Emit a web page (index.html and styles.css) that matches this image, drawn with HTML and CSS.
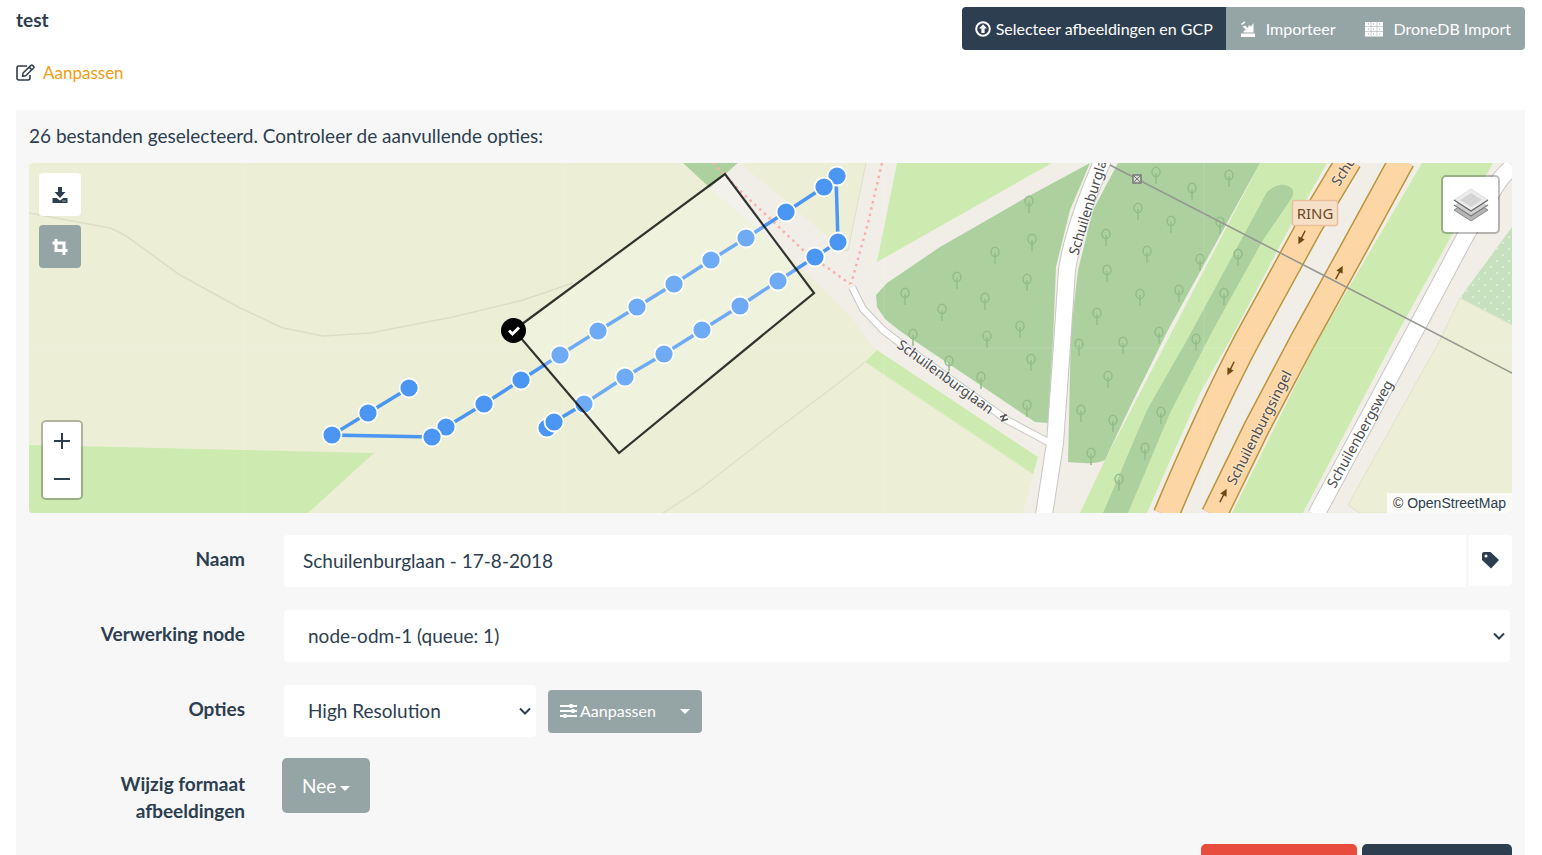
FILE: index.html
```html
<!DOCTYPE html>
<html lang="nl">
<head>
    <meta charset="UTF-8">
    <meta name="viewport" content="width=device-width, initial-scale=1.0">
    <title>test</title>
    <link rel="stylesheet" href="styles.css">
</head>
<body>
<main class="page">
    <header class="project-header">
        <div class="project-info">
            <h1 class="project-name">test</h1>
            <a class="edit-link" href="#">
                <svg class="icon-edit" viewBox="0 0 19 17" width="19" height="17" aria-hidden="true">
                    <path d="M11 2H3Q1 2 1 4v10q0 2 2 2h9q2 0 2-2v-3" fill="none" stroke="currentColor" stroke-width="1.6"/>
                    <path d="M6.5 12.3 7 9l8-7.600q.8-.7 1.600 0l1 1q.7.800 0 1.600L9.700 11.800Z M13.300 3.300l2.400 2.400" fill="#fff" stroke="currentColor" stroke-width="1.5" stroke-linejoin="round"/>
                </svg>
                <span>Aanpassen</span>
            </a>
        </div>
        <div class="btn-group">
            <button type="button" class="btn btn-primary">
                <svg viewBox="0 0 16 16" width="16" height="16" aria-hidden="true">
                    <circle cx="8" cy="8" r="6.800" fill="none" stroke="currentColor" stroke-width="2"/>
                    <path d="M8 3.300 12 7.500H9.600V12H6.400V7.500H4Z" fill="currentColor"/>
                </svg>
                Selecteer afbeeldingen en GCP
            </button>
            <button type="button" class="btn btn-default btn-import">
                <svg viewBox="0 0 16 16" width="16" height="16" aria-hidden="true">
                    <path d="M1 12.500h14V16H1ZM3.500 11.500V10L6 9 2.500 5.500 5 4.500 8 7l1-3 2 1.500L13.500 2v9.500ZM1 3 4.500.3l.8 1.200L2 4Z" fill="currentColor"/>
                </svg>
                Importeer
            </button>
            <button type="button" class="btn btn-default btn-import">
                <svg viewBox="0 0 20 16" width="20" height="16" aria-hidden="true">
                    <path d="M1 1h18v4.400H1ZM1 6h18v4.400H1ZM1 11h18v4.400H1Z" fill="currentColor"/>
                    <path d="M4 3h1m4 0h1m5 0h1M4 8h1m4 0h1m5 0h1M4 13h1m4 0h1m5 0h1" stroke="#95a5a6"/>
                    <path d="M7 1v14M13 1v14" stroke="#95a5a6" stroke-opacity=".5"/>
                </svg>
                DroneDB Import
            </button>
        </div>
    </header>

    <section class="panel">
        <p class="summary">26 bestanden geselecteerd. Controleer de aanvullende opties:</p>

        <div class="map">
            <svg class="map-canvas" viewBox="29 163 1483 350" preserveAspectRatio="xMidYMid slice" role="img" aria-label="Kaart">
                <defs>
                    <g id="tree" fill="none" stroke="#92bd88" stroke-width="1.500">
                        <ellipse rx="4" ry="4.800"/>
                        <path d="M0 1v11"/>
                    </g>
                    <g id="arrow">
                        <path d="M0 7V-2" stroke="#6b4a10" stroke-width="1.500"/>
                        <path d="M0-8 3.500-1h-7Z" fill="#6b4a10"/>
                    </g>
                    <pattern id="orchard" width="12" height="12" patternUnits="userSpaceOnUse">
                        <rect width="12" height="12" fill="#c7e1bf"/>
                        <path d="M2 3h2M8 9h2" stroke="#deefd8" stroke-width="2"/>
                    </pattern>
                </defs>

                <!-- land use -->
                <rect x="-400" y="163" width="2400" height="350" fill="#ecefd5"/>
                <path d="M29 445 374 453 308 513H-400V445Z" fill="#cdebb0"/>
                <path d="M683 163h55l-28 25Z" fill="#add19e"/>
                <path d="M710 188 738 163H2000V513H1023L1033 477 1038 457 877 350 867 340 852 318 790 257Z" fill="#f1eee8"/>
                <path d="M740 163 840 247q5 5 8 3L866 163Z" fill="#ecefd5"/>
                <path d="M840 247q5 5 8 3L866 163" fill="none" stroke="#dddfcb"/>
                <path d="M897 163h155L877 262Z" fill="#cdebb0"/>
                <path d="M877 350 1038 457 1033 474 865 362Z" fill="#cdebb0"/>
                <path d="M1090 163 1027 197 940 247 887 283 876 295 877 307 885 319 900 331 1035 422 1048 423 1053 340 1056 267 1070 210Z" fill="#add19e"/>
                <path d="M1260 163h67L1310 193 1290 227 1230 340 1200 393 1147 513H1080L1105 460Z" fill="#cdebb0"/>
                <path d="M1118 163h142L1168 330 1130 407 1105 460Q1098 465 1068 462L1071 330 1078 270 1093 210Z" fill="#add19e"/>
                <path d="M1267 192Q1278 182 1288 186T1289 202L1263 240 1213 330 1170 413 1128 513H1103L1147 410 1187 340Z" fill="#add19e"/>
                <path d="M1422 163h71L1478 190 1453 233 1397 334 1303 513H1232L1318 340Z" fill="#cdebb0"/>
                <path d="M1512 227 1460 298 1512 325 2000 560V227Z" fill="url(#orchard)"/>
                <path d="M1460 298 1512 325 2000 560V513H1360L1348 505 1440 340Z" fill="#ecefd5" stroke="#e0e2c8"/>
                <path d="M29 213 110 228Q125 234 140 246L180 275 240 308 283 328 323 336 370 333 453 317 523 300 573 283" fill="none" stroke="#dcdec5" stroke-width="1.500"/>
                <path d="M865 362 840 382 780 427 700 489 663 513" fill="none" stroke="#dfe1ca" stroke-width="1.500"/>

                <g>
                    <use href="#tree" x="1156" y="172"/><use href="#tree" x="1138" y="208"/><use href="#tree" x="1171" y="221"/>
                    <use href="#tree" x="1106" y="234"/><use href="#tree" x="1147" y="251"/><use href="#tree" x="1107" y="270"/>
                    <use href="#tree" x="1140" y="294"/><use href="#tree" x="1179" y="290"/><use href="#tree" x="1097" y="313"/>
                    <use href="#tree" x="1159" y="332"/><use href="#tree" x="1032" y="239"/><use href="#tree" x="1029" y="201"/>
                    <use href="#tree" x="995" y="252"/><use href="#tree" x="957" y="277"/><use href="#tree" x="905" y="293"/>
                    <use href="#tree" x="1027" y="279"/><use href="#tree" x="985" y="298"/><use href="#tree" x="942" y="309"/>
                    <use href="#tree" x="1020" y="326"/><use href="#tree" x="913" y="334"/><use href="#tree" x="987" y="336"/>
                    <use href="#tree" x="1031" y="359"/><use href="#tree" x="949" y="361"/><use href="#tree" x="981" y="377"/>
                    <use href="#tree" x="1027" y="405"/><use href="#tree" x="1079" y="344"/><use href="#tree" x="1123" y="342"/>
                    <use href="#tree" x="1108" y="376"/><use href="#tree" x="1081" y="410"/><use href="#tree" x="1113" y="420"/>
                    <use href="#tree" x="1091" y="453"/><use href="#tree" x="1161" y="412"/><use href="#tree" x="1145" y="448"/>
                    <use href="#tree" x="1119" y="479"/><use href="#tree" x="1192" y="188"/><use href="#tree" x="1229" y="175"/>
                    <use href="#tree" x="1220" y="222"/><use href="#tree" x="1200" y="259"/><use href="#tree" x="1238" y="254"/>
                    <use href="#tree" x="1224" y="293"/><use href="#tree" x="1196" y="339"/>
                </g>

                <!-- paths and roads -->
                <path d="M713 163 737 188 763 212 803 250 850 284M882 163 868 223 851 284" fill="none" stroke="#f9b0a8" stroke-width="2.500" stroke-dasharray="2.500 4"/>
                <g fill="none" stroke-linejoin="round">
                    <path d="M852 287 863 309 883 330 900 343 1007 420 1050 443" stroke="#c9c6c4" stroke-width="8"/>
                    <path d="M1044 515 1055 443 1062 345 1067 270Q1074 225 1103 160M1316 515 1410 340 1467 233 1497 184Q1503 174 1520 160" stroke="#c9c6c4" stroke-width="18"/>
                    <path d="M852 287 863 309 883 330 900 343 1007 420 1050 443" stroke="#fff" stroke-width="6"/>
                    <path d="M1044 515 1055 443 1062 345 1067 270Q1074 225 1103 160M1316 515 1410 340 1467 233 1497 184Q1503 174 1520 160" stroke="#fff" stroke-width="16"/>
                    <path d="M1349 160 1310 225 1247 340Q1210 410 1166 515M1402 160 1350 255 1303 340 1257 427 1214 515" stroke="#b9953f" stroke-width="27"/>
                    <path d="M1349 160 1310 225 1247 340Q1210 410 1166 515M1402 160 1350 255 1303 340 1257 427 1214 515" stroke="#fcd6a4" stroke-width="24"/>
                </g>
                <path d="m1000 417 7-2m-6 6 7-2m-6 2 3-7" stroke="#555" stroke-width="1.500"/>
                <path d="M1110 165 1137 179 1323 275 1512 373 1700 470" fill="none" stroke="#969690" stroke-width="1.500"/>
                <rect x="1133" y="175" width="8" height="8" fill="#d5dccb" stroke="#777" stroke-width="1.500"/>
                <path d="m1134 176 6 6m0-6-6 6" stroke="#777"/>
                <use href="#arrow" transform="translate(1302 237) rotate(207)"/>
                <use href="#arrow" transform="translate(1339 273) rotate(28)"/>
                <use href="#arrow" transform="translate(1231 368) rotate(207)"/>
                <use href="#arrow" transform="translate(1223 496) rotate(27)"/>
                <path d="M244 163v350M564 163v350M884 163v350M1204 163v350M29 348h1483" stroke="#fff" stroke-opacity=".14"/>

                <g class="map-label">
                    <text transform="translate(896 347) rotate(36)">Schuilenburglaan</text>
                    <text transform="translate(1078 256) rotate(-73)">Schuilenburglaan</text>
                    <text transform="translate(1235 486) rotate(-63)">Schuilenburgsingel</text>
                    <text transform="translate(1335 489) rotate(-61)">Schuilenbergsweg</text>
                    <text transform="translate(1339 187) rotate(-57)">Schui</text>
                </g>
                <rect x="1292.500" y="200.500" width="45" height="25" rx="2" fill="#f7e0c8" stroke="#e9bf9b" stroke-width="1.500"/>
                <text class="map-ref" x="1315" y="219" text-anchor="middle">RING</text>

                <!-- flight path with one dot per photo -->
                <path d="M409 388 368 413 332 435 432 437 446 427 484 404 521 380 560 355 598 331 637 307 674 284 711 260 746 238 786 212 824 187 836 176 838 242 815 257 778 281 740 306 702 330 664 354 625 377 584 404 554 422 547 428" fill="none" stroke="#4b96f3" stroke-width="3.500"/>
                <g fill="#4b96f3" stroke="#fff" stroke-width="1.800">
                    <circle cx="409" cy="388" r="9.500"/><circle cx="368" cy="413" r="9.500"/><circle cx="332" cy="435" r="9.500"/>
                    <circle cx="446" cy="427" r="9.500"/><circle cx="432" cy="437" r="9.500"/><circle cx="484" cy="404" r="9.500"/>
                    <circle cx="521" cy="380" r="9.500"/><circle cx="560" cy="355" r="9.500"/><circle cx="598" cy="331" r="9.500"/>
                    <circle cx="637" cy="307" r="9.500"/><circle cx="674" cy="284" r="9.500"/><circle cx="711" cy="260" r="9.500"/>
                    <circle cx="746" cy="238" r="9.500"/><circle cx="786" cy="212" r="9.500"/><circle cx="837" cy="176" r="9.500"/>
                    <circle cx="824" cy="187" r="9.500"/><circle cx="838" cy="242" r="9.500"/><circle cx="815" cy="257" r="9.500"/>
                    <circle cx="778" cy="281" r="9.500"/><circle cx="740" cy="306" r="9.500"/><circle cx="702" cy="330" r="9.500"/>
                    <circle cx="664" cy="354" r="9.500"/><circle cx="625" cy="377" r="9.500"/><circle cx="584" cy="404" r="9.500"/>
                    <circle cx="547" cy="428" r="9.500"/><circle cx="554" cy="422" r="9.500"/>
                </g>

                <!-- crop area -->
                <path d="M514 330 725 174 814 293 619 453Z" fill="#fff" fill-opacity=".2" stroke="#111" stroke-opacity=".85" stroke-width="2.200"/>
                <circle cx="513.500" cy="330.500" r="12.500"/>
                <path d="m509 330.500 3.500 3.500 6.500-6.500" fill="none" stroke="#fff" stroke-width="3"/>
            </svg>

            <div class="map-tools">
                <button type="button" class="map-btn" aria-label="Download">
                    <svg viewBox="0 0 16 16" width="16" height="16" aria-hidden="true">
                        <path d="M6 0h4v5h3.500L8 11 2.500 5H6ZM.5 11h4L8 13.500 11.500 11h4v5H.5Z" fill="currentColor"/>
                        <path d="M10.500 14h1m1 0h1" stroke="#fff"/>
                    </svg>
                </button>
                <button type="button" class="map-btn map-btn-crop" aria-label="Bijsnijden">
                    <svg viewBox="0 0 16 16" width="16" height="16" aria-hidden="true">
                        <path d="M4 0v11.500h11.500M.5 4H12v12" fill="none" stroke="currentColor" stroke-width="3"/>
                    </svg>
                </button>
            </div>
            <button type="button" class="map-layers" aria-label="Lagen">
                <svg viewBox="0 0 36 34" width="36" height="34" aria-hidden="true">
                    <path d="M1 22 18 12l17 10-17 11Z" fill="#b5b5b5" stroke="#8c8c8c"/>
                    <path d="M1 17 18 7l17 10-17 11Z" fill="#cfcfcf" stroke="#fff"/>
                    <path d="m1 17 17 11 17-11" fill="none" stroke="#777" stroke-width="1.300"/>
                    <path d="M1 12 18 1l17 11-17 11Z" fill="#ececec" stroke="#ddd"/>
                    <path d="m7 12 11-7 11 7-11 7Z" fill="#d4d4d4"/>
                    <path d="m1 12 17 11 17-11" fill="none" stroke="#666" stroke-width="1.300"/>
                </svg>
            </button>
            <div class="map-zoom">
                <button type="button" aria-label="Inzoomen"><svg viewBox="0 0 16 16" width="16" height="16" aria-hidden="true"><path d="M0 8h16M8 0v16" stroke="currentColor" stroke-width="2"/></svg></button>
                <button type="button" aria-label="Uitzoomen"><svg viewBox="0 0 16 16" width="16" height="16" aria-hidden="true"><path d="M0 8h16" stroke="currentColor" stroke-width="2"/></svg></button>
            </div>
            <div class="map-attribution">© <a href="#">OpenStreetMap</a></div>
        </div>

        <form class="task-form">
            <div class="form-row">
                <label for="taskName">Naam</label>
                <div class="name-group">
                    <input class="field" type="text" id="taskName" value="Schuilenburglaan - 17-8-2018">
                    <button type="button" class="btn-tag" aria-label="Tags">
                        <svg viewBox="0 0 17 17" width="17" height="17" aria-hidden="true">
                            <path d="M0 2Q0 0 2 0h6.500L17 8 9 16.500 0 8Z" fill="currentColor"/>
                            <circle cx="4" cy="4" r="1.500" fill="#fff"/>
                        </svg>
                    </button>
                </div>
            </div>
            <div class="form-row">
                <label for="node">Verwerking node</label>
                <div class="node-group">
                    <select class="field" id="node">
                        <option>node-odm-1 (queue: 1)</option>
                    </select>
                </div>
            </div>
            <div class="form-row">
                <label for="preset">Opties</label>
                <div class="preset-group">
                    <select class="field field-preset" id="preset">
                        <option>High Resolution</option>
                    </select>
                    <div class="btn-group">
                        <button type="button" class="btn btn-default btn-edit">
                            <svg viewBox="0 0 17 16" width="17" height="16" aria-hidden="true">
                                <path d="M0 3h17M0 8h17M0 13h17" stroke="currentColor" stroke-width="2"/>
                                <path d="M11 1v4M5 11v4M13 6v4" stroke="currentColor" stroke-width="3"/>
                            </svg>
                            Aanpassen
                        </button>
                        <button type="button" class="btn btn-default btn-toggle" aria-label="Meer opties"><span class="caret"></span></button>
                    </div>
                </div>
            </div>
            <div class="form-row">
                <label for="resize">Wijzig formaat afbeeldingen</label>
                <button type="button" class="btn-resize" id="resize">Nee<span class="caret"></span></button>
            </div>
            <div class="form-actions">
                <button type="button" class="btn-action btn-cancel">Annuleren</button>
                <button type="submit" class="btn-action btn-next">Beoordelen</button>
            </div>
        </form>
    </section>
</main>
</body>
</html>
```
FILE: styles.css
```css
* {
    box-sizing: border-box;
}

body {
    margin: 0;
    background: #fff;
    color: #2c3e50;
    font-family: Lato, "Liberation Sans", sans-serif;
    font-size: 19px;
    line-height: 27px;
}

button, input, select {
    font-family: inherit;
    color: inherit;
}

button {
    cursor: pointer;
}

.page {
    height: 100vh;
    padding: 6px 17px 0 16px;
    overflow-y: auto;
    scrollbar-width: none;
}

.project-header {
    display: flex;
    justify-content: space-between;
    align-items: flex-start;
    height: 104px;
}

.project-header .btn-group {
    margin-top: 1px;
}

.project-name {
    margin: 0 0 26px;
    font-size: 19px;
    line-height: 27px;
    font-weight: bold;
}

.edit-link {
    display: flex;
    align-items: center;
    gap: 8px;
    color: #f39c12;
    font-size: 17px;
    line-height: 27px;
    text-decoration: none;
}

.icon-edit {
    color: #2c3e50;
}

.btn-group {
    display: flex;
    border-radius: 4px;
    overflow: hidden;
}

.btn {
    display: flex;
    align-items: center;
    gap: 5px;
    height: 43px;
    padding: 0 13px;
    border: none;
    color: #fff;
    font-size: 16px;
    line-height: 24px;
}

.btn-primary {
    background: #2c3e50;
}

.btn-default {
    background: #95a5a6;
}

.btn-import {
    gap: 10px;
    padding: 0 14px;
}

.btn-edit {
    gap: 3px;
    padding: 0 12px;
}

.btn-toggle {
    padding: 0 12px;
}

.panel {
    padding: 12px 13px;
    background: #f7f7f7;
}

.summary {
    margin: 0 0 14px;
}

/* map */
.map {
    position: relative;
    height: 350px;
    border-radius: 4px;
    overflow: hidden;
}

.map-canvas {
    display: block;
    width: 100%;
    height: 100%;
}

.map-label {
    fill: #4c4c4c;
    stroke: #fff;
    stroke-opacity: .4;
    stroke-width: 2px;
    paint-order: stroke;
    font-family: "Noto Sans", sans-serif;
    font-size: 14px;
}

.map-ref {
    fill: #6b4a26;
    font-family: "Noto Sans", sans-serif;
    font-size: 15px;
}

.map-tools {
    position: absolute;
    top: 10px;
    left: 10px;
    display: flex;
    flex-direction: column;
    gap: 9px;
}

.map-btn {
    display: flex;
    align-items: center;
    justify-content: center;
    width: 42px;
    height: 43px;
    padding: 0;
    border: none;
    border-radius: 4px;
    background: #fff;
}

.map-btn-crop {
    background: #95a5a6;
    color: #fff;
}

.map-layers {
    position: absolute;
    top: 12px;
    right: 12px;
    display: flex;
    align-items: center;
    justify-content: center;
    width: 59px;
    height: 59px;
    padding: 0;
    border: 2px solid rgba(0, 0, 0, .25);
    border-radius: 5px;
    background: #fff;
    background-clip: padding-box;
}

.map-zoom {
    position: absolute;
    bottom: 13px;
    left: 12px;
    display: flex;
    flex-direction: column;
    border: 2px solid rgba(0, 0, 0, .25);
    border-radius: 5px;
    overflow: hidden;
}

.map-zoom button {
    display: flex;
    align-items: center;
    justify-content: center;
    width: 38px;
    height: 38px;
    padding: 0;
    border: none;
    background: #fff;
}

.map-attribution {
    position: absolute;
    right: 0;
    bottom: 0;
    padding: 0 6px;
    background: rgba(255, 255, 255, .8);
    color: #333;
    font-family: "Liberation Sans", Arial, sans-serif;
    font-size: 14px;
    line-height: 20px;
}

.map-attribution a {
    color: #2c3e50;
    text-decoration: none;
}

/* form */
.task-form {
    display: flex;
    flex-direction: column;
    gap: 23px;
    padding-top: 22px;
}

.form-row {
    display: grid;
    grid-template-columns: 216px 1fr;
    column-gap: 39px;
    align-items: start;
}

.form-row label {
    padding-top: 10px;
    padding-left: 60px;
    font-weight: bold;
    text-align: right;
}

.field {
    width: 100%;
    height: 52px;
    padding: 0 19px 2px;
    border: none;
    border-radius: 4px;
    background-color: #fff;
    font-size: 19px;
}

select.field {
    padding-left: 24px;
    appearance: none;
    background-image: url("data:image/svg+xml,%3Csvg xmlns='http://www.w3.org/2000/svg' width='12' height='8'%3E%3Cpath d='M1 1.500 6 6.500 11 1.500' fill='none' stroke='%232c3e50' stroke-width='2'/%3E%3C/svg%3E");
    background-repeat: no-repeat;
    background-position: right 5px center;
}

.name-group {
    display: flex;
    gap: 3px;
}

.name-group .field {
    border-radius: 4px 0 0 4px;
}

.btn-tag {
    display: flex;
    align-items: center;
    justify-content: center;
    flex: none;
    width: 43px;
    height: 51px;
    padding: 0;
    border: none;
    border-radius: 0 4px 4px 0;
    background: #fff;
}

.node-group {
    padding-right: 2px;
}

.preset-group {
    display: flex;
    align-items: center;
    gap: 12px;
}

.preset-group .field-preset {
    width: 252px;
}

.caret {
    display: inline-block;
    border-top: 5px solid #fff;
    border-left: 5px solid transparent;
    border-right: 5px solid transparent;
    vertical-align: middle;
}

.btn-resize {
    justify-self: start;
    height: 55px;
    margin: -2px 0 0 -2px;
    padding: 0 20px;
    border: none;
    border-radius: 5px;
    background: #95a5a6;
    color: #fff;
    font-size: 19px;
}

.btn-resize .caret {
    margin-left: 4px;
}

.form-actions {
    display: flex;
    justify-content: flex-end;
    gap: 5px;
    margin-top: -3px;
}

.btn-action {
    width: 156px;
    height: 56px;
    border: none;
    border-radius: 5px;
    color: #fff;
    font-size: 19px;
}

.btn-cancel {
    background: #e74c3c;
}

.btn-next {
    width: 150px;
    background: #2c3e50;
}
```
